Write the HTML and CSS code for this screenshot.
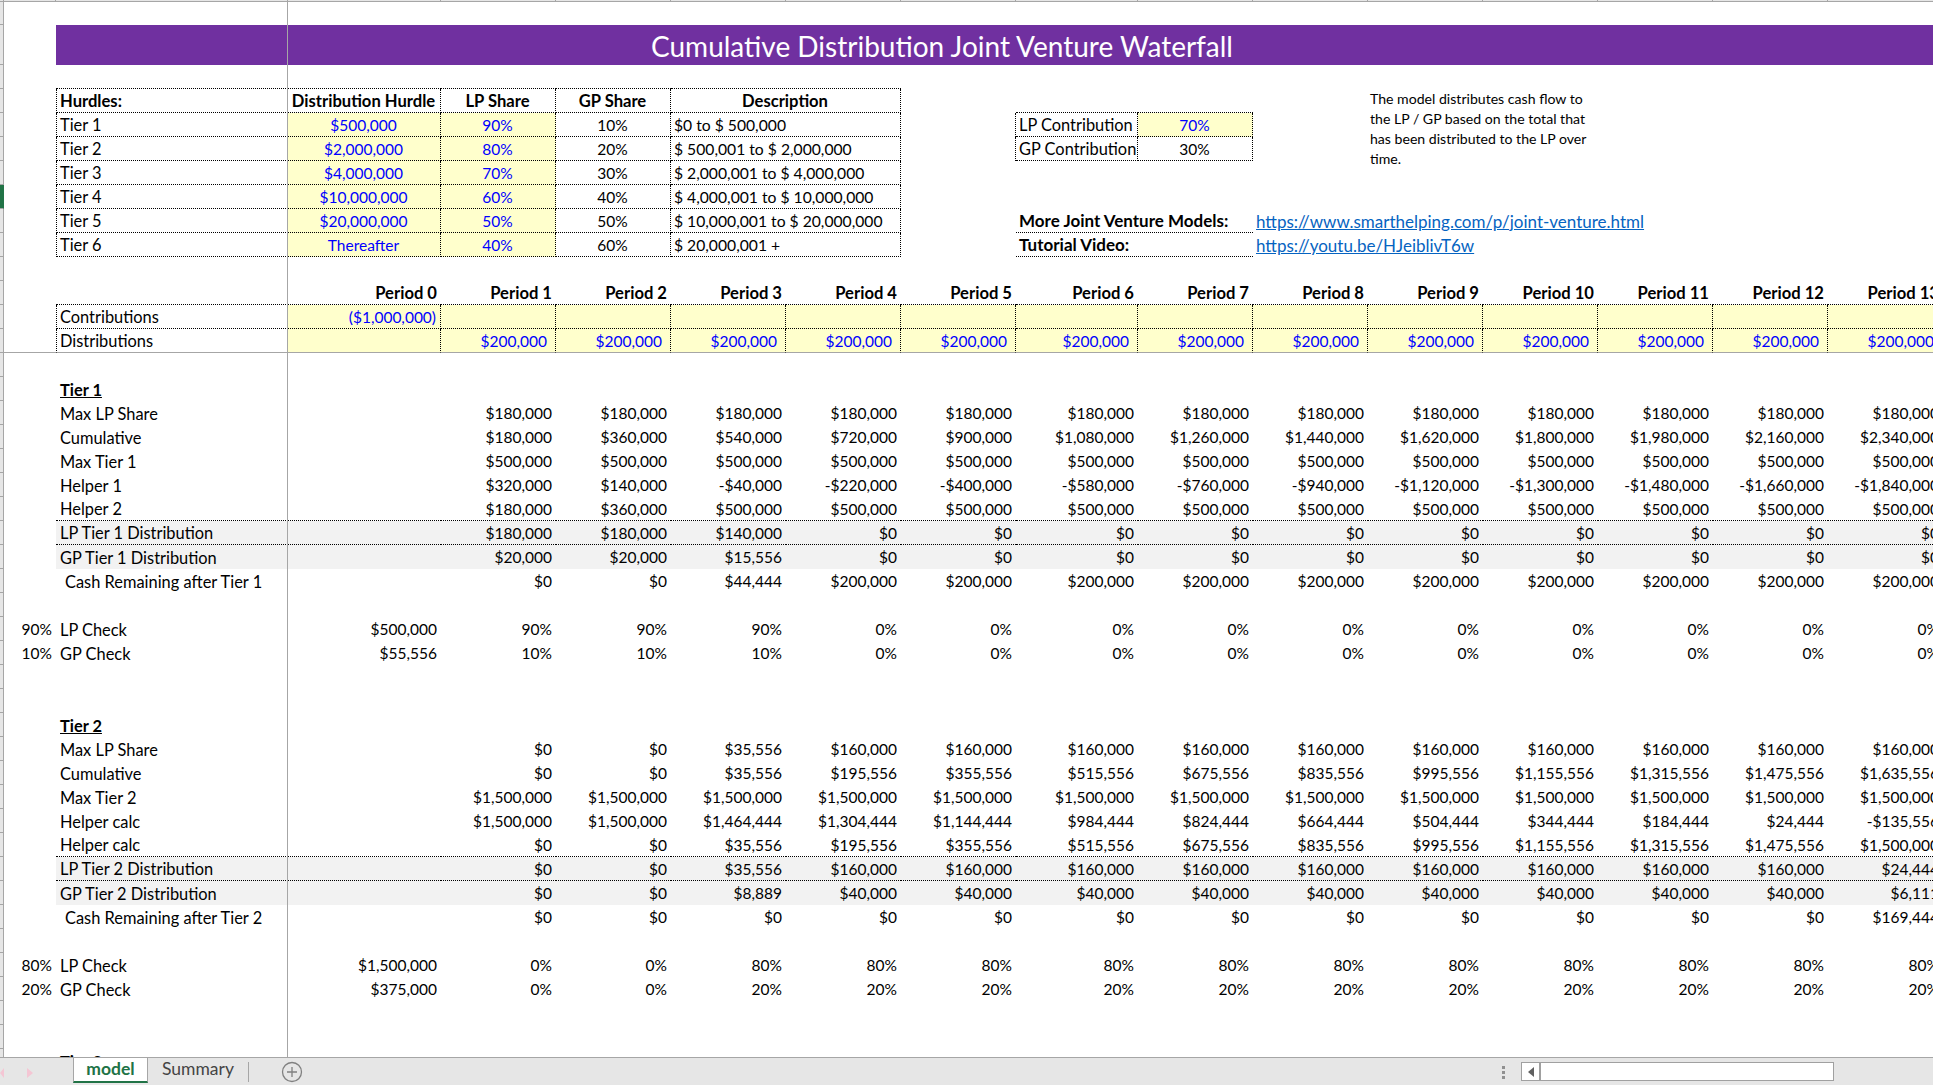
FILE: index.html
```html
<!DOCTYPE html>
<html lang="en">
<head>
<meta charset="utf-8">
<title>Cumulative Distribution Joint Venture Waterfall</title>
<link rel="stylesheet" href="styles.css">
</head>
<body>
<main class="sheet">
<table class="grid">
<colgroup><col class="c-rh"><col class="c-a"><col class="c-b"><col class="c-c"><col class="c-n"><col class="c-n"><col class="c-n"><col class="c-n"><col class="c-n"><col class="c-i"><col class="c-n"><col class="c-n"><col class="c-n"><col class="c-n"><col class="c-n"><col class="c-n"><col class="c-n"></colgroup>
<tbody>
<tr class="ch"><td></td><td></td><td></td><td></td><td></td><td></td><td></td><td></td><td></td><td></td><td></td><td></td><td></td><td></td><td></td><td></td><td></td></tr>
<tr class="r1"><td class="rh"></td><td colspan="16"></td></tr>
<tr class="title"><td class="rh"></td><td></td><td colspan="14" class="title-cell">Cumulative Distribution Joint Venture Waterfall</td><td class="title-end"></td></tr>
<tr><td class="rh"></td><td></td><td class="b"></td><td class="b"></td><td class="b"></td><td class="b"></td><td class="b" colspan="2"></td><td colspan="9"></td></tr>
<tr class="bold"><td class="rh"></td><td></td><td class="lbl l b">Hurdles:</td><td class="ctr rr b">Distribution Hurdle</td><td class="ctr rr b">LP Share</td><td class="ctr rr b">GP Share</td><td colspan="2" class="ctr rr b">Description</td><td></td><td class="b"></td><td class="b"></td><td colspan="6"></td></tr>
<tr><td class="rh"></td><td></td><td class="lbl l b">Tier 1</td><td class="ctr in rr b">$500,000</td><td class="ctr in rr b">90%</td><td class="ctr rr b">10%</td><td colspan="2" class="lbl desc rr b">$0 to $ 500,000</td><td class="rr"></td><td class="lbl tight rr b">LP Contribution</td><td class="ctr in rr b">70%</td><td colspan="6"></td></tr>
<tr><td class="rh"></td><td></td><td class="lbl l b">Tier 2</td><td class="ctr in rr b">$2,000,000</td><td class="ctr in rr b">80%</td><td class="ctr rr b">20%</td><td colspan="2" class="lbl desc rr b">$ 500,001 to $ 2,000,000</td><td class="rr"></td><td class="lbl tight rr b">GP Contribution</td><td class="ctr rr b">30%</td><td colspan="6"></td></tr>
<tr><td class="rh"></td><td></td><td class="lbl l b">Tier 3</td><td class="ctr in rr b">$4,000,000</td><td class="ctr in rr b">70%</td><td class="ctr rr b">30%</td><td colspan="2" class="lbl desc rr b">$ 2,000,001 to $ 4,000,000</td><td colspan="9"></td></tr>
<tr><td class="rh sel"></td><td></td><td class="lbl l b">Tier 4</td><td class="ctr in rr b">$10,000,000</td><td class="ctr in rr b">60%</td><td class="ctr rr b">40%</td><td colspan="2" class="lbl desc rr b">$ 4,000,001 to $ 10,000,000</td><td colspan="9"></td></tr>
<tr><td class="rh"></td><td></td><td class="lbl l b">Tier 5</td><td class="ctr in rr b">$20,000,000</td><td class="ctr in rr b">50%</td><td class="ctr rr b">50%</td><td colspan="2" class="lbl desc rr b">$ 10,000,001 to $ 20,000,000</td><td></td><td colspan="2" class="lbl tight strong b">More Joint Venture Models:</td><td colspan="6" class="lbl tight"><a href="#" class="link">https://www.smarthelping.com/p/joint-venture.html</a></td></tr>
<tr><td class="rh"></td><td></td><td class="lbl l b">Tier 6</td><td class="ctr in rr b">Thereafter</td><td class="ctr in rr b">40%</td><td class="ctr rr b">60%</td><td colspan="2" class="lbl desc rr b">$ 20,000,001 +</td><td></td><td colspan="2" class="lbl tight strong b">Tutorial Video:</td><td colspan="6" class="lbl tight"><a href="#" class="link">https://youtu.be/HJeiblivT6w</a></td></tr>
<tr><td class="rh"></td><td colspan="16"></td></tr>
<tr class="bold"><td class="rh"></td><td></td><td class="b"></td><td class="b">Period 0</td><td class="b">Period 1</td><td class="b">Period 2</td><td class="b">Period 3</td><td class="b">Period 4</td><td class="b">Period 5</td><td class="b">Period 6</td><td class="b">Period 7</td><td class="b">Period 8</td><td class="b">Period 9</td><td class="b">Period 10</td><td class="b">Period 11</td><td class="b">Period 12</td><td class="b">Period 13</td></tr>
<tr><td class="rh"></td><td></td><td class="lbl l b">Contributions</td><td class="in rr b">($1,000,000)</td><td class="in rr b"></td><td class="in rr b"></td><td class="in rr b"></td><td class="in rr b"></td><td class="in rr b"></td><td class="in rr b"></td><td class="in rr b"></td><td class="in rr b"></td><td class="in rr b"></td><td class="in rr b"></td><td class="in rr b"></td><td class="in rr b"></td><td class="in rr b"></td></tr>
<tr class="freeze"><td class="rh"></td><td></td><td class="lbl l">Distributions</td><td class="in rr"></td><td class="in rr">$200,000</td><td class="in rr">$200,000</td><td class="in rr">$200,000</td><td class="in rr">$200,000</td><td class="in rr">$200,000</td><td class="in rr">$200,000</td><td class="in rr">$200,000</td><td class="in rr">$200,000</td><td class="in rr">$200,000</td><td class="in rr">$200,000</td><td class="in rr">$200,000</td><td class="in rr">$200,000</td><td class="in rr">$200,000</td></tr>
<tr><td class="rh"></td><td colspan="16"></td></tr>

<tr><td class="rh"></td><td></td><td class="lbl head">Tier 1</td><td colspan="14"></td></tr>
<tr><td class="rh"></td><td></td><td class="lbl">Max LP Share</td><td></td><td>$180,000</td><td>$180,000</td><td>$180,000</td><td>$180,000</td><td>$180,000</td><td>$180,000</td><td>$180,000</td><td>$180,000</td><td>$180,000</td><td>$180,000</td><td>$180,000</td><td>$180,000</td><td>$180,000</td></tr>
<tr><td class="rh"></td><td></td><td class="lbl">Cumulative</td><td></td><td>$180,000</td><td>$360,000</td><td>$540,000</td><td>$720,000</td><td>$900,000</td><td>$1,080,000</td><td>$1,260,000</td><td>$1,440,000</td><td>$1,620,000</td><td>$1,800,000</td><td>$1,980,000</td><td>$2,160,000</td><td>$2,340,000</td></tr>
<tr><td class="rh"></td><td></td><td class="lbl">Max Tier 1</td><td></td><td>$500,000</td><td>$500,000</td><td>$500,000</td><td>$500,000</td><td>$500,000</td><td>$500,000</td><td>$500,000</td><td>$500,000</td><td>$500,000</td><td>$500,000</td><td>$500,000</td><td>$500,000</td><td>$500,000</td></tr>
<tr><td class="rh"></td><td></td><td class="lbl">Helper 1</td><td></td><td>$320,000</td><td>$140,000</td><td>-$40,000</td><td>-$220,000</td><td>-$400,000</td><td>-$580,000</td><td>-$760,000</td><td>-$940,000</td><td>-$1,120,000</td><td>-$1,300,000</td><td>-$1,480,000</td><td>-$1,660,000</td><td>-$1,840,000</td></tr>
<tr class="under"><td class="rh"></td><td></td><td class="lbl">Helper 2</td><td></td><td>$180,000</td><td>$360,000</td><td>$500,000</td><td>$500,000</td><td>$500,000</td><td>$500,000</td><td>$500,000</td><td>$500,000</td><td>$500,000</td><td>$500,000</td><td>$500,000</td><td>$500,000</td><td>$500,000</td></tr>
<tr class="band under"><td class="rh"></td><td></td><td class="lbl">LP Tier 1 Distribution</td><td></td><td>$180,000</td><td>$180,000</td><td>$140,000</td><td>$0</td><td>$0</td><td>$0</td><td>$0</td><td>$0</td><td>$0</td><td>$0</td><td>$0</td><td>$0</td><td>$0</td></tr>
<tr class="band"><td class="rh"></td><td></td><td class="lbl">GP Tier 1 Distribution</td><td></td><td>$20,000</td><td>$20,000</td><td>$15,556</td><td>$0</td><td>$0</td><td>$0</td><td>$0</td><td>$0</td><td>$0</td><td>$0</td><td>$0</td><td>$0</td><td>$0</td></tr>
<tr><td class="rh"></td><td></td><td class="lbl indent">Cash Remaining after Tier 1</td><td></td><td>$0</td><td>$0</td><td>$44,444</td><td>$200,000</td><td>$200,000</td><td>$200,000</td><td>$200,000</td><td>$200,000</td><td>$200,000</td><td>$200,000</td><td>$200,000</td><td>$200,000</td><td>$200,000</td></tr>
<tr><td class="rh"></td><td colspan="16"></td></tr>
<tr><td class="rh"></td><td>90%</td><td class="lbl">LP Check</td><td>$500,000</td><td>90%</td><td>90%</td><td>90%</td><td>0%</td><td>0%</td><td>0%</td><td>0%</td><td>0%</td><td>0%</td><td>0%</td><td>0%</td><td>0%</td><td>0%</td></tr>
<tr><td class="rh"></td><td>10%</td><td class="lbl">GP Check</td><td>$55,556</td><td>10%</td><td>10%</td><td>10%</td><td>0%</td><td>0%</td><td>0%</td><td>0%</td><td>0%</td><td>0%</td><td>0%</td><td>0%</td><td>0%</td><td>0%</td></tr>
<tr><td class="rh"></td><td colspan="16"></td></tr>
<tr><td class="rh"></td><td colspan="16"></td></tr>

<tr><td class="rh"></td><td></td><td class="lbl head">Tier 2</td><td colspan="14"></td></tr>
<tr><td class="rh"></td><td></td><td class="lbl">Max LP Share</td><td></td><td>$0</td><td>$0</td><td>$35,556</td><td>$160,000</td><td>$160,000</td><td>$160,000</td><td>$160,000</td><td>$160,000</td><td>$160,000</td><td>$160,000</td><td>$160,000</td><td>$160,000</td><td>$160,000</td></tr>
<tr><td class="rh"></td><td></td><td class="lbl">Cumulative</td><td></td><td>$0</td><td>$0</td><td>$35,556</td><td>$195,556</td><td>$355,556</td><td>$515,556</td><td>$675,556</td><td>$835,556</td><td>$995,556</td><td>$1,155,556</td><td>$1,315,556</td><td>$1,475,556</td><td>$1,635,556</td></tr>
<tr><td class="rh"></td><td></td><td class="lbl">Max Tier 2</td><td></td><td>$1,500,000</td><td>$1,500,000</td><td>$1,500,000</td><td>$1,500,000</td><td>$1,500,000</td><td>$1,500,000</td><td>$1,500,000</td><td>$1,500,000</td><td>$1,500,000</td><td>$1,500,000</td><td>$1,500,000</td><td>$1,500,000</td><td>$1,500,000</td></tr>
<tr><td class="rh"></td><td></td><td class="lbl">Helper calc</td><td></td><td>$1,500,000</td><td>$1,500,000</td><td>$1,464,444</td><td>$1,304,444</td><td>$1,144,444</td><td>$984,444</td><td>$824,444</td><td>$664,444</td><td>$504,444</td><td>$344,444</td><td>$184,444</td><td>$24,444</td><td>-$135,556</td></tr>
<tr class="under"><td class="rh"></td><td></td><td class="lbl">Helper calc</td><td></td><td>$0</td><td>$0</td><td>$35,556</td><td>$195,556</td><td>$355,556</td><td>$515,556</td><td>$675,556</td><td>$835,556</td><td>$995,556</td><td>$1,155,556</td><td>$1,315,556</td><td>$1,475,556</td><td>$1,500,000</td></tr>
<tr class="band under"><td class="rh"></td><td></td><td class="lbl">LP Tier 2 Distribution</td><td></td><td>$0</td><td>$0</td><td>$35,556</td><td>$160,000</td><td>$160,000</td><td>$160,000</td><td>$160,000</td><td>$160,000</td><td>$160,000</td><td>$160,000</td><td>$160,000</td><td>$160,000</td><td>$24,444</td></tr>
<tr class="band"><td class="rh"></td><td></td><td class="lbl">GP Tier 2 Distribution</td><td></td><td>$0</td><td>$0</td><td>$8,889</td><td>$40,000</td><td>$40,000</td><td>$40,000</td><td>$40,000</td><td>$40,000</td><td>$40,000</td><td>$40,000</td><td>$40,000</td><td>$40,000</td><td>$6,111</td></tr>
<tr><td class="rh"></td><td></td><td class="lbl indent">Cash Remaining after Tier 2</td><td></td><td>$0</td><td>$0</td><td>$0</td><td>$0</td><td>$0</td><td>$0</td><td>$0</td><td>$0</td><td>$0</td><td>$0</td><td>$0</td><td>$0</td><td>$169,444</td></tr>
<tr><td class="rh"></td><td colspan="16"></td></tr>
<tr><td class="rh"></td><td>80%</td><td class="lbl">LP Check</td><td>$1,500,000</td><td>0%</td><td>0%</td><td>80%</td><td>80%</td><td>80%</td><td>80%</td><td>80%</td><td>80%</td><td>80%</td><td>80%</td><td>80%</td><td>80%</td><td>80%</td></tr>
<tr><td class="rh"></td><td>20%</td><td class="lbl">GP Check</td><td>$375,000</td><td>0%</td><td>0%</td><td>20%</td><td>20%</td><td>20%</td><td>20%</td><td>20%</td><td>20%</td><td>20%</td><td>20%</td><td>20%</td><td>20%</td><td>20%</td></tr>
<tr><td class="rh"></td><td colspan="16"></td></tr>
<tr><td class="rh"></td><td colspan="16"></td></tr>
<tr><td class="rh"></td><td></td><td class="lbl head">Tier 3</td><td colspan="14"></td></tr>
</tbody>
</table>
<div class="freeze-col"></div>
<p class="note">The model distributes cash flow to the LP / GP based on the total that has been distributed to the LP over time.</p>
</main>
<footer class="tabbar">
  <div class="tab-nav">
    <svg class="nav-l" width="4" height="10" viewBox="0 0 4 10"><path d="M4 0v10L0 5z"/></svg>
    <svg class="nav-r" width="6" height="10" viewBox="0 0 6 10"><path d="M0 0v10l6-5z"/></svg>
  </div>
  <div class="tab active">model</div>
  <div class="tab">Summary</div>
  <div class="tab-sep"></div>
  <svg class="add" width="22" height="22" viewBox="0 0 22 22"><circle cx="11" cy="11" r="9.5"/><path d="M11 6v10M6 11h10"/></svg>
  <div class="spacer"></div>
  <svg class="grip" width="4" height="14" viewBox="0 0 4 14"><path d="M0 0h3v3H0zM0 5h3v3H0zM0 10h3v3H0z"/></svg>
  <div class="hscroll">
    <div class="hscroll-btn"><svg width="6" height="10" viewBox="0 0 6 10"><path d="M6 0v10L0 5z"/></svg></div>
  </div>
</footer>
</body>
</html>
```
FILE: styles.css
```css
* { box-sizing: border-box; }
html, body { margin: 0; height: 100%; overflow: hidden; background: #fff; }
body {
  display: flex;
  flex-direction: column;
  font-family: Lato, "Open Sans", sans-serif;
  font-size: 15.5px;
  color: #000;
}
.sheet { position: relative; flex: 1; min-height: 0; overflow: hidden; }

.grid { table-layout: fixed; width: 1943px; border-collapse: separate; border-spacing: 0; }
.c-rh { width: 4px; }
.c-a { width: 52px; }
.c-b { width: 232px; }
.c-c { width: 153px; }
.c-n { width: 115px; }
.c-i { width: 122px; }

.grid td {
  height: 24px;
  padding: 0 4px 0 3px;
  text-align: right;
  white-space: nowrap;
  line-height: 20px;
}
.grid .rh {
  padding: 0;
  background: #e6e6e6;
  border-right: 1px solid #a6a6a6;
  border-bottom: 1px solid #a6a6a6;
}
.grid .rh.sel { background: #217346; border-right-color: #217346; }

.grid .ch td {
  height: 2px;
  padding: 0;
  line-height: 0;
  background: #e6e6e6;
  border-right: 1px solid #a6a6a6;
  border-bottom: 1px solid #a6a6a6;
}
.grid .r1 td { height: 23px; }
.grid .title td { height: 40px; }
.grid .title-cell, .grid .title-end { background: #7030a0; }
.grid .title-cell {
  color: #fff;
  text-align: center;
  font-size: 28px;
  padding: 2px 0 0;
}

.grid .lbl { text-align: left; font-size: 16.4px; padding: 1px 4px 0; }
.grid .tight, .grid .l { padding-left: 3px; }
.grid .desc { font-size: 15.7px; padding: 0 4px 0 3px; }
.grid .ctr { text-align: center; }
.grid .in { background: #ffc; color: #00f; }
.grid .b { border-bottom: 1px dotted #000; }
.grid .rr { border-right: 1px dotted #000; }
.grid .l { border-left: 1px dotted #000; }
.grid .bold td { font-weight: 700; font-size: 16.6px; padding-top: 1px; }
.grid .strong { font-weight: 700; font-size: 17px; }
.grid .head { font-weight: 700; text-decoration: underline; }
.grid .indent { padding-left: 9px; }

.under td:nth-child(n+3) { border-bottom: 1px dotted #000; }
.band td:nth-child(n+3) { background: #f2f2f2; }
.freeze td { border-bottom: 1px solid #a6a6a6; }
.freeze .in { padding-right: 8px; }

.link { color: #0563c1; text-decoration: underline; font-size: 17px; }

.freeze-col {
  position: absolute;
  left: 287px;
  top: 0;
  bottom: 0;
  width: 1px;
  background: #a6a6a6;
}
.note {
  position: absolute;
  left: 1370px;
  top: 89px;
  width: 225px;
  margin: 0;
  font-size: 14.1px;
  line-height: 20px;
}

.tabbar {
  flex: none;
  height: 28px;
  display: flex;
  align-items: flex-start;
  background: #e6e6e6;
  border-top: 1px solid #a6a6a6;
}
.tab-nav { position: relative; width: 73px; height: 100%; }
.tab-nav svg { position: absolute; top: 10px; fill: #f4c6d4; }
.nav-l { left: 0; }
.nav-r { left: 27px; }
.tab {
  height: 26px;
  font-size: 17.5px;
  line-height: 22px;
  color: #444;
  padding: 0 14px;
}
.tab.active {
  width: 75px;
  margin-top: -1px;
  height: 26px;
  padding: 0;
  line-height: 21px;
  text-align: center;
  font-weight: 700;
  color: #217346;
  background: #fff;
  border: 1px solid #a6a6a6;
  border-bottom: 2px solid #217346;
}
.tab-sep { width: 1px; height: 20px; margin-top: 4px; background: #a6a6a6; }
.add { margin: 3px 0 0 32px; fill: none; stroke: #808080; stroke-width: 1.3; }
.spacer { flex: 1; }
.grip { margin: 8px 15px 0 0; fill: #909090; }
.hscroll {
  width: 313px;
  height: 19px;
  margin: 4px 99px 0 0;
  background: #fff;
  border: 1px solid #a0a0a0;
}
.hscroll-btn {
  width: 19px;
  height: 100%;
  display: flex;
  align-items: center;
  justify-content: center;
  border-right: 2px solid #a0a0a0;
  fill: #606060;
}
```
